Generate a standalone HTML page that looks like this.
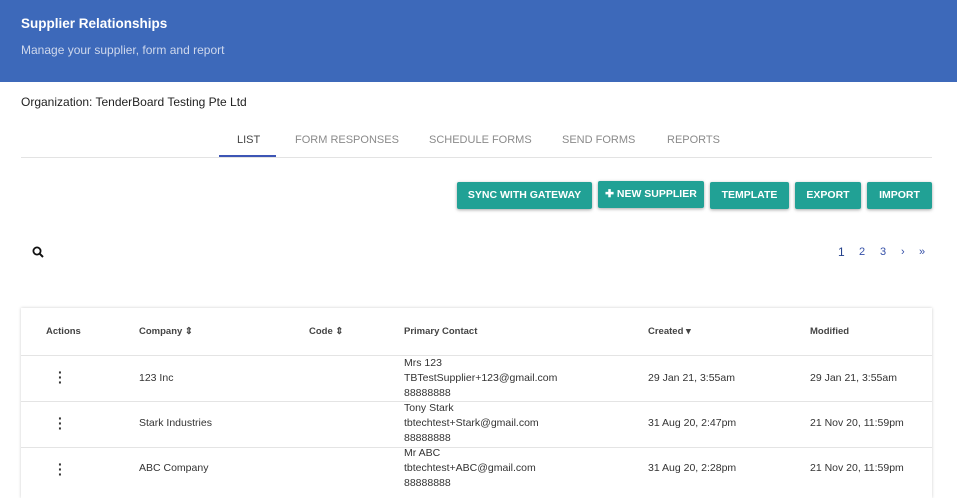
<!DOCTYPE html><html><head><style>
body{margin:0;width:957px;height:492px;overflow:hidden;background:#fff;font-family:"Liberation Sans",sans-serif;position:relative}
.a{position:absolute;white-space:nowrap}
.hdr{position:absolute;left:0;top:0;width:957px;height:82px;background:#3d69ba}
.tab{position:absolute;top:134px;font-size:11px;color:#8a8a8a}
.btn{position:absolute;top:182px;height:27px;background:#21a195;color:#fff;font-size:10.5px;font-weight:bold;text-align:center;line-height:27px;border-radius:2px;box-shadow:0 1px 3px rgba(0,0,0,.35)}
.card{position:absolute;left:21px;top:308px;width:911px;height:190px;box-shadow:0 0 3px rgba(0,0,0,.2);background:#fff}
.th{position:absolute;top:326px;font-size:9.5px;color:#444;font-weight:bold}
.td{position:absolute;font-size:10.5px;color:#333;line-height:15px}
.hl{position:absolute;left:21px;width:911px;height:1px;background:#e4e4e4}
.pg{position:absolute;top:246px;font-size:11px;color:#3550a8}
</style></head><body>
<div class="hdr"></div>
<div class="a" style="left:21px;top:16px;font-size:13.5px;font-weight:bold;color:#fff">Supplier Relationships</div>
<div class="a" style="left:21px;top:43px;font-size:12px;color:#cfd8ec">Manage your supplier, form and report</div>
<div class="a" style="left:21px;top:95px;font-size:12px;color:#222">Organization: TenderBoard Testing Pte Ltd</div>
<div class="tab" style="left:237px;color:#444">LIST</div>
<div class="tab" style="left:295px">FORM RESPONSES</div>
<div class="tab" style="left:429px">SCHEDULE FORMS</div>
<div class="tab" style="left:562px">SEND FORMS</div>
<div class="tab" style="left:667px">REPORTS</div>
<div class="a" style="left:21px;top:157px;width:911px;height:1px;background:#e3e3e3"></div>
<div class="a" style="left:219px;top:155px;width:57px;height:2px;background:#3d55b5"></div>
<div class="btn" style="left:457px;width:135px">SYNC WITH GATEWAY</div>
<div class="btn" style="left:598px;width:106px;top:181px">✚ NEW SUPPLIER</div>
<div class="btn" style="left:710px;width:79px">TEMPLATE</div>
<div class="btn" style="left:795px;width:66px">EXPORT</div>
<div class="btn" style="left:867px;width:65px">IMPORT</div>
<svg class="a" style="left:32px;top:246px" width="13" height="13" viewBox="0 0 13 13"><circle cx="5" cy="5" r="3.6" fill="none" stroke="#111" stroke-width="1.8"/><path d="M7.7 7.7L11 11" stroke="#111" stroke-width="2"/></svg>
<div class="pg" style="left:838px;font-size:12px;top:245px;color:#223f8a">1</div>
<div class="pg" style="left:859px">2</div>
<div class="pg" style="left:880px">3</div>
<div class="pg" style="left:901px">›</div>
<div class="pg" style="left:919px">»</div>
<div class="card"></div>
<div class="th" style="left:46px">Actions</div>
<div class="th" style="left:139px">Company ⇕</div>
<div class="th" style="left:309px">Code ⇕</div>
<div class="th" style="left:404px">Primary Contact</div>
<div class="th" style="left:648px">Created ▾</div>
<div class="th" style="left:810px">Modified</div>
<div class="hl" style="top:355px"></div>
<div class="hl" style="top:401px"></div>
<div class="hl" style="top:447px"></div>
<div class="td" style="left:58px;top:370px;font-size:14px;line-height:5px;font-weight:bold">·<br>·<br>·</div>
<div class="td" style="left:139px;top:371px">123 Inc</div>
<div class="td" style="left:404px;top:356px">Mrs 123<br>TBTestSupplier+123@gmail.com<br>88888888</div>
<div class="td" style="left:648px;top:371px">29 Jan 21, 3:55am</div>
<div class="td" style="left:810px;top:371px">29 Jan 21, 3:55am</div>
<div class="td" style="left:58px;top:416px;font-size:14px;line-height:5px;font-weight:bold">·<br>·<br>·</div>
<div class="td" style="left:139px;top:416px">Stark Industries</div>
<div class="td" style="left:404px;top:401px">Tony Stark<br>tbtechtest+Stark@gmail.com<br>88888888</div>
<div class="td" style="left:648px;top:416px">31 Aug 20, 2:47pm</div>
<div class="td" style="left:810px;top:416px">21 Nov 20, 11:59pm</div>
<div class="td" style="left:58px;top:462px;font-size:14px;line-height:5px;font-weight:bold">·<br>·<br>·</div>
<div class="td" style="left:139px;top:461px">ABC Company</div>
<div class="td" style="left:404px;top:446px">Mr ABC<br>tbtechtest+ABC@gmail.com<br>88888888</div>
<div class="td" style="left:648px;top:461px">31 Aug 20, 2:28pm</div>
<div class="td" style="left:810px;top:461px">21 Nov 20, 11:59pm</div>
</body></html>
